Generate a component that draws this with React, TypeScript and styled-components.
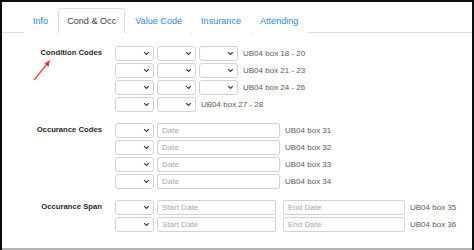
import React, {FC, ReactElement} from 'react';
import styled, {createGlobalStyle} from 'styled-components';

const GlobalStyle = createGlobalStyle`
html, body {
  margin: 0;
  padding: 0;
  background: #0b0b0b;
}
body {
  font-family: 'Liberation Sans', Arial, Helvetica, sans-serif;
}
`

const Frame = styled.div`
width: 474px;
height: 250px;
box-sizing: border-box;
padding: 2px 2px 0 2px;
display: flex;
flex-direction: column;`

const Panel = styled.div`
flex: 1;
position: relative;
background: #fff;
border-bottom: 2px solid #b4b4b4;
display: flex;
flex-direction: column;`

const TabBar = styled.div`
display: flex;
height: 24px;
margin-top: 6px;
padding-left: 22px;
border-bottom: 1px solid #dddddd;`

const Tab = styled.div<{$active?: boolean}>`
box-sizing: border-box;
height: 25px;
margin-right: 1px;
padding: 0 8px;
display: flex;
align-items: center;
font-size: 9.1px;
color: ${p => p.$active ? '#444' : '#3189cc'};
background: #fff;
border: 1px solid ${p => p.$active ? '#dddddd' : 'transparent'};
border-bottom-color: ${p => p.$active ? '#fff' : 'transparent'};
border-radius: 3px 3px 0 0;`

const Form = styled.div`
display: flex;
flex-direction: column;
gap: 11px;
padding-top: 13px;`

const Section = styled.div`
display: grid;
grid-template-columns: 100px 1fr;
column-gap: 13px;`

const Label = styled.div`
font-size: 7.7px;
font-weight: bold;
line-height: 14px;
text-align: right;
color: #2a2a2a;`

const Rows = styled.div`
display: flex;
flex-direction: column;
gap: 2px;`

const Row = styled.div`
display: flex;
align-items: center;
gap: 3px;
height: 15px;`

const SelectBox = styled.div`
box-sizing: border-box;
width: 39px;
height: 15px;
border: 1px solid #d2d2d2;
border-radius: 3px;
background: #fff;
display: flex;
align-items: center;
justify-content: flex-end;
padding-right: 3px;`

const DateInput = styled.input<{$w: number; $ml?: number}>`
box-sizing: border-box;
width: ${p => p.$w}px;
height: 15px;
margin: 0 0 0 ${p => p.$ml || 0}px;
padding: 0 4px;
border: 1px solid #d2d2d2;
border-radius: 2px;
font-family: 'Liberation Sans', Arial, sans-serif;
font-size: 8px;
color: #333;
outline: none;
&::placeholder {
  color: #a8a8a8;
}`

const Hint = styled.span`
margin-left: 2px;
font-size: 8px;
color: #5a5a5a;
white-space: nowrap;`

const Pointer = styled.svg`
position: absolute;
left: 29px;
top: 56px;`

const Select: FC = (): ReactElement => (
    <SelectBox>
        <svg width="7" height="5" viewBox="0 0 7 5">
            <path d="M1.2 1.2 L3.5 3.5 L5.8 1.2" fill="none" stroke="#3a3a3a" strokeWidth="1.2"/>
        </svg>
    </SelectBox>
)

const tabs = ['Info', 'Cond & Occ', 'Value Code', 'Insurance', 'Attending']

const App: FC = (): ReactElement => {
    return (
        <Frame>
            <GlobalStyle/>
            <Panel>
                <TabBar>
                    {tabs.map(t => <Tab key={t} $active={t === 'Cond & Occ'}>{t}</Tab>)}
                </TabBar>
                <Form>
                    <Section>
                        <Label>Condition Codes</Label>
                        <Rows>
                            <Row><Select/><Select/><Select/><Hint>UB04 box 18 - 20</Hint></Row>
                            <Row><Select/><Select/><Select/><Hint>UB04 box 21 - 23</Hint></Row>
                            <Row><Select/><Select/><Select/><Hint>UB04 box 24 - 26</Hint></Row>
                            <Row><Select/><Select/><Hint>UB04 box 27 - 28</Hint></Row>
                        </Rows>
                    </Section>
                    <Section>
                        <Label>Occurance Codes</Label>
                        <Rows>
                            {[31, 32, 33, 34].map(n => (
                                <Row key={n}><Select/><DateInput $w={123} placeholder="Date"/><Hint>UB04 box {n}</Hint></Row>
                            ))}
                        </Rows>
                    </Section>
                    <Section>
                        <Label>Occurance Span</Label>
                        <Rows>
                            {[35, 36].map(n => (
                                <Row key={n}>
                                    <Select/>
                                    <DateInput $w={119} placeholder="Start Date"/>
                                    <DateInput $w={122} $ml={4} placeholder="End Date"/>
                                    <Hint>UB04 box {n}</Hint>
                                </Row>
                            ))}
                        </Rows>
                    </Section>
                </Form>
                <Pointer width="24" height="26" viewBox="0 0 24 26">
                    <line x1="3" y1="22" x2="16" y2="6" stroke="#e2402b" strokeWidth="1.2"/>
                    <path d="M19 2 L17.6 9 L13.4 5.6 Z" fill="#e2402b"/>
                </Pointer>
            </Panel>
        </Frame>
    )
}
export default App;
